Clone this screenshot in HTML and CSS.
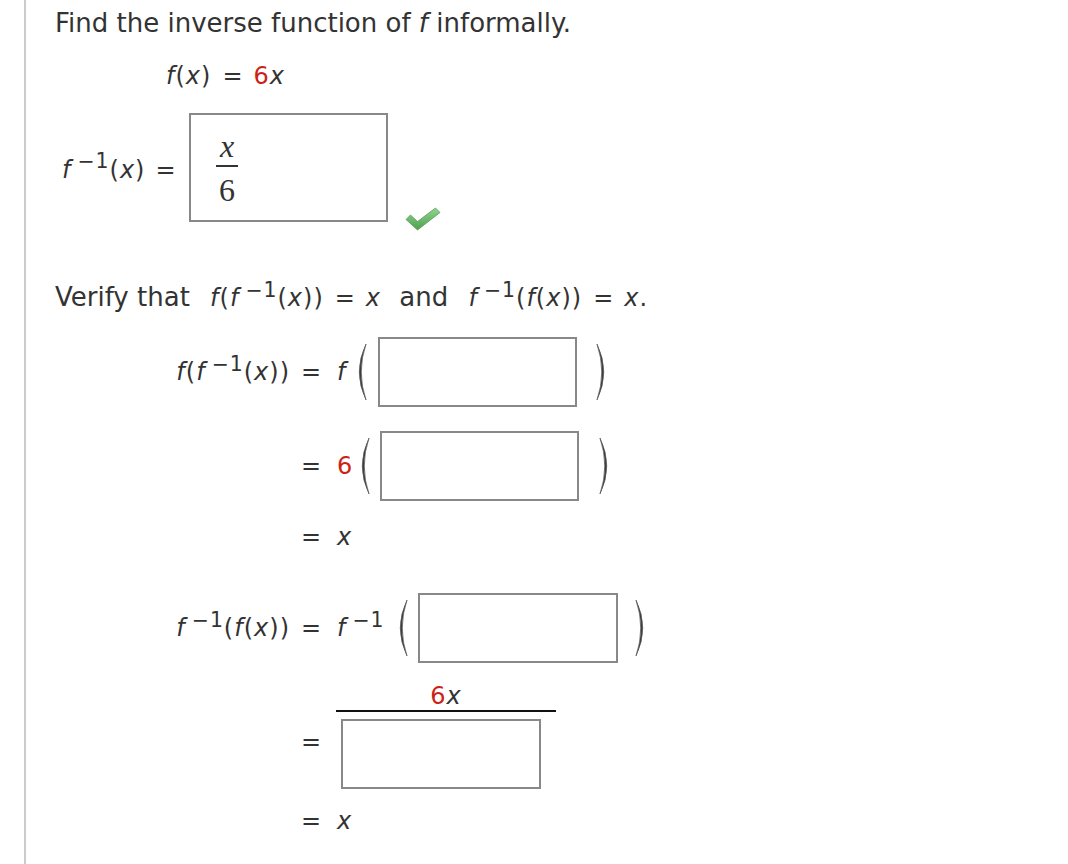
FILE: index.html
```html
<!DOCTYPE html>
<html>
<head>
<meta charset="utf-8">
<link rel="stylesheet" href="styles.css">
</head>
<body>
<div class="page">
  <p class="title">Find the inverse function of <i>f</i> informally.</p>
  <div class="given"><i>f</i>(<i>x</i>)<span class="eqs-sign">=</span><span class="red">6</span><i>x</i></div>

  <div class="answer-row">
    <span class="alabel"><i>f</i><sup class="inv">−1</sup>(<i>x</i>)<span class="eqs-sign">=</span></span>
    <div class="abox">
      <span class="frac"><span class="num">x</span><span class="den">6</span></span>
    </div>
    <svg class="check" viewBox="0 0 36 24" width="36" height="24">
      <defs>
        <linearGradient id="g" x1="0" y1="0" x2="0" y2="1">
          <stop offset="0" stop-color="#8fd68f"/>
          <stop offset="1" stop-color="#4f9f4f"/>
        </linearGradient>
      </defs>
      <path d="M1 12.5 L5.5 8 L12.5 14.5 L30.5 1 L35 5.5 L12.5 23 Z" fill="url(#g)" stroke="#5a9a5a" stroke-width="0.8" stroke-linejoin="round"/>
    </svg>
  </div>

  <p class="verify">Verify that <span class="m m1"><i>f</i>(<i>f</i><sup class="inv">−1</sup>(<i>x</i>))<span class="eqs-sign">=</span><i>x</i></span> and <span class="m m2"><i>f</i><sup class="inv">−1</sup>(<i>f</i>(<i>x</i>))<span class="eqs-sign">=</span><i>x</i>.</span></p>

  <div class="eqs">
    <div class="row r1">
      <span class="lhs"><i>f</i>(<i>f</i><sup class="inv">−1</sup>(<i>x</i>))</span>
      <span class="eq">=</span>
      <span class="rhs">
        <i class="fn">f</i>
        <svg class="paren lp1" viewBox="0 0 14 58" width="14" height="58"><path d="M13 1 Q-0.5 29 13 57 Q3.5 29 13 1 Z" fill="#3a3a3a" stroke="#555" stroke-width="0.7"/></svg>
        <span class="box b1"></span>
        <svg class="paren rp1" viewBox="0 0 14 58" width="14" height="58"><path d="M1 1 Q14.5 29 1 57 Q10.5 29 1 1 Z" fill="#3a3a3a" stroke="#555" stroke-width="0.7"/></svg>
      </span>
    </div>

    <div class="row r2">
      <span class="lhs"></span>
      <span class="eq">=</span>
      <span class="rhs">
        <span class="red six">6</span>
        <svg class="paren lp2" viewBox="0 0 14 58" width="14" height="58"><path d="M13 1 Q-0.5 29 13 57 Q3.5 29 13 1 Z" fill="#3a3a3a" stroke="#555" stroke-width="0.7"/></svg>
        <span class="box b2"></span>
        <svg class="paren rp2" viewBox="0 0 14 58" width="14" height="58"><path d="M1 1 Q14.5 29 1 57 Q10.5 29 1 1 Z" fill="#3a3a3a" stroke="#555" stroke-width="0.7"/></svg>
      </span>
    </div>

    <div class="row r3">
      <span class="lhs"></span>
      <span class="eq">=</span>
      <span class="rhs"><i>x</i></span>
    </div>

    <div class="row r4">
      <span class="lhs"><i>f</i><sup class="inv">−1</sup>(<i>f</i>(<i>x</i>))</span>
      <span class="eq">=</span>
      <span class="rhs">
        <span class="fn"><i>f</i><sup class="inv">−1</sup></span>
        <svg class="paren lp4" viewBox="0 0 14 58" width="14" height="58"><path d="M13 1 Q-0.5 29 13 57 Q3.5 29 13 1 Z" fill="#3a3a3a" stroke="#555" stroke-width="0.7"/></svg>
        <span class="box b4"></span>
        <svg class="paren rp4" viewBox="0 0 14 58" width="14" height="58"><path d="M1 1 Q14.5 29 1 57 Q10.5 29 1 1 Z" fill="#3a3a3a" stroke="#555" stroke-width="0.7"/></svg>
      </span>
    </div>

    <div class="row r5">
      <span class="lhs"></span>
      <span class="eq eq5">=</span>
      <span class="rhs">
        <span class="bigfrac">
          <span class="bnum"><span class="red">6</span><i>x</i></span>
          <span class="bbar"></span>
          <span class="box b5"></span>
        </span>
      </span>
    </div>

    <div class="row r6">
      <span class="lhs"></span>
      <span class="eq">=</span>
      <span class="rhs"><i>x</i></span>
    </div>
  </div>
</div>
</body>
</html>
```

FILE: styles.css
```css
html, body {
  margin: 0;
  padding: 0;
  background: #fff;
}

body {
  font-family: "DejaVu Sans", Verdana, sans-serif;
  color: #333;
}

.page {
  margin-left: 24px;
  border-left: 2px solid #cbcbcb;
  min-height: 864px;
  box-sizing: border-box;
  padding: 7px 0 0 29px;
}

i {
  font-style: italic;
}

.red {
  color: #cc2216;
}

.title {
  margin: 0;
  font-size: 26px;
  line-height: 32px;
}

.given {
  margin: 21px 0 0 111px;
  font-size: 24px;
  line-height: 32px;
  letter-spacing: 1px;
}

.eqs-sign {
  margin: 0 10px 0 11px;
}

.inv {
  font-size: 0.85em;
  vertical-align: 0.45em;
  line-height: 0;
  margin-left: 6px;
}

.answer-row {
  display: flex;
  align-items: center;
  margin-top: 21px;
}

.alabel {
  font-size: 24px;
  line-height: 32px;
  letter-spacing: 1px;
  padding-left: 7px;
  width: 127px;
  flex: none;
  margin-top: 4px;
}

.alabel .eqs-sign {
  margin: 0 0 0 10px;
}

.abox {
  width: 199px;
  height: 109px;
  box-sizing: border-box;
  border: 2px solid #888;
  display: flex;
  align-items: center;
  padding-left: 25px;
  flex: none;
}

.frac {
  display: inline-flex;
  flex-direction: column;
  align-items: center;
  font-family: "Liberation Serif", "Times New Roman", serif;
  font-size: 32px;
  line-height: 32px;
  color: #333;
}

.num {
  font-style: italic;
  box-sizing: border-box;
  width: 22px;
  padding-bottom: 3px;
  border-bottom: 2px solid #333;
  text-align: center;
}

.den {
  padding-top: 7px;
}

.check {
  align-self: flex-end;
  margin: 0 0 -9px 17px;
}

.verify {
  margin: 59px 0 0 0;
  font-size: 26px;
  line-height: 32px;
}

.verify .m {
  font-size: 24px;
  letter-spacing: 1px;
}

.verify .m1 {
  margin: 0 10px 0 12px;
}

.verify .m2 {
  margin-left: 12px;
}

.eqs {
  margin-top: 23px;
}

.row {
  display: flex;
  align-items: center;
  font-size: 24px;
  letter-spacing: 1px;
}

.lhs {
  width: 235px;
  text-align: right;
  flex: none;
  line-height: 32px;
}

.eq {
  width: 43px;
  text-align: center;
  flex: none;
  line-height: 32px;
}

.rhs {
  display: flex;
  align-items: center;
  margin-left: 4px;
  line-height: 32px;
}

.box {
  display: block;
  box-sizing: border-box;
  border: 2px solid #888;
  height: 70px;
  background: #fff;
  flex: none;
}

.paren {
  display: block;
  flex: none;
}

.fn {
  line-height: 32px;
}

.lp1 { margin-left: 7px; }
.b1 { width: 199px; margin-left: 11px; }
.rp1 { margin-left: 19px; }

.r2 { margin-top: 24px; }
.six { line-height: 32px; }
.lp2 { margin-left: 3px; }
.b2 { width: 199px; margin-left: 10px; }
.rp2 { margin-left: 20px; }

.r3 { margin-top: 20px; height: 32px; }

.r4 { margin-top: 40px; }
.lp4 { margin-left: 9px; }
.b4 { width: 200px; margin-left: 10px; }
.rp4 { margin-left: 17px; }

.r5 {
  margin-top: 19px;
  align-items: flex-start;
}

.eq5 {
  margin-top: 44px;
}

.bigfrac {
  display: flex;
  flex-direction: column;
  margin-left: -1px;
}

.bnum {
  width: 220px;
  text-align: center;
  line-height: 28px;
}

.bbar {
  display: block;
  width: 220px;
  height: 2px;
  background: #111;
}

.b5 {
  width: 200px;
  margin: 7px 0 0 5px;
}

.r6 {
  margin-top: 16px;
  height: 32px;
}
```
